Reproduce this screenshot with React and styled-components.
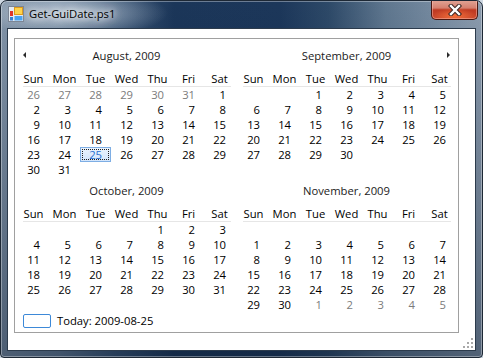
import React from "react";
import styled, { createGlobalStyle } from "styled-components";

const GlobalStyle = createGlobalStyle`
  html, body {
    margin: 0;
    padding: 0;
    background: #cfd8e2;
  }
  body {
    font-family: "Open Sans", "Noto Sans", sans-serif;
    font-size: 11.25px;
  }
`;

const Window = styled.div`
  width: 483px;
  height: 358px;
  box-sizing: border-box;
  border: 1px solid #1d2835;
  border-radius: 7px 7px 4px 4px;
  overflow: hidden;
  display: flex;
  flex-direction: column;
  box-shadow: inset 0 0 0 1px rgba(255, 255, 255, 0.35);
  background:
    radial-gradient(ellipse 95px 24px at 72px 12px, rgba(232, 240, 248, 0.6), rgba(232, 240, 248, 0) 100%),
    linear-gradient(180deg, rgba(0, 0, 0, 0) 0%, rgba(12, 28, 50, 0.45) 100%),
    linear-gradient(90deg, #8395a9 0%, #6c829a 12%, #3b5676 24%, #1b3659 36%, #1c375a 58%, #2d4968 68%, #5f778f 80%, #7a8ea3 92%, #8c9cae 100%);
`;

const TitleBar = styled.div`
  height: 27px;
  flex: none;
  display: flex;
  align-items: flex-start;
  padding-left: 7px;
`;

const AppIcon = styled.svg`
  margin-top: 5px;
  flex: none;
`;

const Title = styled.span`
  margin: 5px 0 0 5px;
  line-height: 16px;
  color: #000;
  text-shadow: 0 0 6px #fff, 0 0 10px rgba(255, 255, 255, 0.85), 0 0 14px rgba(255, 255, 255, 0.6);
`;

const Spacer = styled.div`
  flex: 1;
`;

const CloseButton = styled.div`
  width: 47px;
  height: 20px;
  box-sizing: border-box;
  margin: -1px 4px 0 0;
  border: 1px solid #4b1811;
  border-top: none;
  border-radius: 0 0 5px 5px;
  display: flex;
  align-items: center;
  justify-content: center;
  box-shadow: inset 0 0 0 1px rgba(255, 200, 190, 0.45);
  background:
    radial-gradient(ellipse 22px 8px at 50% 85%, rgba(255, 120, 60, 0.8), rgba(255, 120, 60, 0) 100%),
    linear-gradient(180deg, #e2a597 0%, #d5806f 42%, #bf3a22 52%, #c8472d 100%);
`;

const Client = styled.div`
  flex: none;
  position: relative;
  height: 323px;
  margin: 0 6px;
  box-sizing: border-box;
  border: 1px solid #2c3b4c;
  background: #fff;
  padding: 9px 0 0 6px;
`;

const Calendar = styled.div`
  width: 445px;
  height: 295px;
  box-sizing: border-box;
  border: 1px solid #a0a0a0;
  padding: 4px 3px 3px;
  display: flex;
  flex-direction: column;
`;

const MonthGrid = styled.div`
  display: grid;
  grid-template-columns: 217px 217px;
  grid-auto-rows: 134px;
  column-gap: 3px;
  row-gap: 1px;
`;

const Month = styled.div`
  display: flex;
  flex-direction: column;
`;

const MonthHeader = styled.div`
  height: 26px;
  display: grid;
  grid-template-columns: 20px 1fr 20px;
  align-items: center;
`;

const MonthTitle = styled.div`
  text-align: center;
  line-height: 16px;
  color: #1b1b1b;
`;

const Arrow = styled.div`
  width: 0;
  height: 0;
  margin-top: -2px;
  border-top: 3px solid transparent;
  border-bottom: 3px solid transparent;
  ${(p) =>
    p.$dir === "left"
      ? "border-right: 3px solid #2a2a2a; justify-self: start; margin-left: 5px;"
      : "border-left: 3px solid #2a2a2a; justify-self: end; margin-right: 5px;"}
`;

const WeekRow = styled.div`
  display: grid;
  grid-template-columns: repeat(7, 31px);
  height: 17px;
  box-sizing: border-box;
  padding-top: 2px;
`;

const WeekDay = styled.div`
  text-align: center;
  line-height: 15px;
  color: #000;
`;

const Divider = styled.div`
  height: 1px;
  background: #e6e6e6;
  margin: 0 4px 0 5px;
`;

const DayGrid = styled.div`
  display: grid;
  grid-template-columns: repeat(7, 31px);
  grid-auto-rows: 15px;
`;

const Day = styled.div`
  position: relative;
  box-sizing: border-box;
  text-align: right;
  padding-right: 9px;
  line-height: 15px;
  color: ${(p) => (p.$muted ? "#7b7b7b" : "#000")};

  ${(p) =>
    p.$selected &&
    `
    color: #2b6fd0;
    line-height: 13px;
    padding-right: 8px;
    border: 1px solid #7eaee4;
    background: linear-gradient(180deg, #eaf3fd 0%, #d3e5fb 100%);
    &::after {
      content: "";
      position: absolute;
      inset: 1px;
      border: 1px dotted #222;
    }
  `}
`;

const TodayRow = styled.div`
  display: flex;
  align-items: center;
  gap: 6px;
  height: 14px;
  margin-top: 2px;
  padding-left: 5px;
`;

const TodayBox = styled.div`
  width: 28px;
  height: 14px;
  box-sizing: border-box;
  border: 1px solid #3d89d8;
  border-radius: 2px;
`;

const TodayText = styled.span`
  line-height: 14px;
  color: #000;
`;

const Grip = styled.svg`
  position: absolute;
  right: 1px;
  bottom: 1px;
`;

const weekDays = ["Sun", "Mon", "Tue", "Wed", "Thu", "Fri", "Sat"];
const monthNames = ["January", "February", "March", "April", "May", "June", "July", "August", "September", "October", "November", "December"];

const months = [
  { year: 2009, month: 7, first: true, left: true },
  { year: 2009, month: 8, right: true },
  { year: 2009, month: 9 },
  { year: 2009, month: 10, last: true },
];

function buildDays({ year, month, first, last }) {
  const start = new Date(year, month, 1).getDay() || 7;
  const count = new Date(year, month + 1, 0).getDate();
  const prevCount = new Date(year, month, 0).getDate();
  const cells = [];
  for (let i = 0; i < 42; i++) {
    const n = i - start + 1;
    if (n < 1) {
      cells.push(first ? { label: prevCount + n, muted: true } : { label: "" });
    } else if (n > count) {
      cells.push(last ? { label: n - count, muted: true } : { label: "" });
    } else {
      cells.push({ label: n, selected: year === 2009 && month === 7 && n === 25 });
    }
  }
  return cells;
}

function MonthView({ m }) {
  const days = buildDays(m);
  return (
    <Month>
      <MonthHeader>
        <div>{m.left && <Arrow $dir="left" />}</div>
        <MonthTitle>
          {monthNames[m.month]}, {m.year}
        </MonthTitle>
        <div style={{ display: "grid" }}>{m.right && <Arrow $dir="right" />}</div>
      </MonthHeader>
      <WeekRow>
        {weekDays.map((d) => (
          <WeekDay key={d}>{d}</WeekDay>
        ))}
      </WeekRow>
      <Divider />
      <DayGrid>
        {days.map((d, i) => (
          <Day key={i} $muted={d.muted} $selected={d.selected}>
            {d.label}
          </Day>
        ))}
      </DayGrid>
    </Month>
  );
}

export default function App() {
  return (
    <>
      <GlobalStyle />
      <Window>
        <TitleBar>
          <AppIcon width="16" height="16" viewBox="0 0 16 16">
            <rect x="0.5" y="0.5" width="15" height="15" fill="#e4eaf1" stroke="#7b8594" />
            <rect x="2" y="5" width="3" height="5" fill="#e0362a" />
            <rect x="6.5" y="1.5" width="8" height="7" fill="#ffd34a" stroke="#dc9a1c" />
            <rect x="6.5" y="10" width="8" height="4.5" fill="#4aa3f0" />
            <rect x="2" y="11" width="3" height="3.5" fill="#3a7fd0" />
          </AppIcon>
          <Title>Get-GuiDate.ps1</Title>
          <Spacer />
          <CloseButton>
            <svg width="14" height="12" viewBox="0 0 14 12">
              <path d="M3 2 L11 10 M11 2 L3 10" stroke="#3b2622" strokeWidth="4.4" strokeLinecap="square" />
              <path d="M3 2 L11 10 M11 2 L3 10" stroke="#fff" strokeWidth="2.4" strokeLinecap="square" />
            </svg>
          </CloseButton>
        </TitleBar>
        <Client>
          <Calendar>
            <MonthGrid>
              {months.map((m) => (
                <MonthView key={m.month} m={m} />
              ))}
            </MonthGrid>
            <TodayRow>
              <TodayBox />
              <TodayText>Today: 2009-08-25</TodayText>
            </TodayRow>
          </Calendar>
          <Grip width="12" height="12" viewBox="0 0 12 12">
            {[
              [9, 1],
              [5, 5], [9, 5],
              [1, 9], [5, 9], [9, 9],
            ].map(([x, y], i) => (
              <g key={i}>
                <rect x={x + 1} y={y + 1} width="2" height="2" fill="#fff" />
                <rect x={x} y={y} width="2" height="2" fill="#a9a9a9" />
              </g>
            ))}
          </Grip>
        </Client>
      </Window>
    </>
  );
}
